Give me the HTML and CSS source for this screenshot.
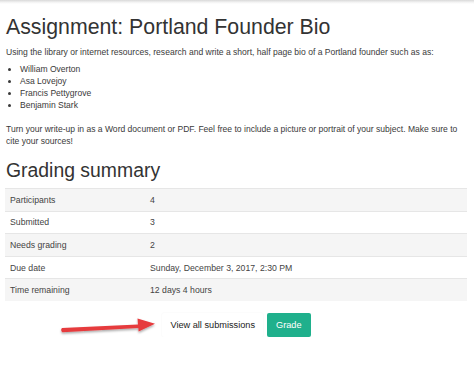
FILE: index.html
```html
<!DOCTYPE html>
<html lang="en">

<head>
    <meta charset="UTF-8">
    <title>Assignment: Portland Founder Bio</title>

    <link rel="stylesheet" href="styles.css">
</head>

<body>
    <div class="topbar"></div>
    <div id="page">
        <h2 class="title">Assignment: Portland Founder Bio</h2>
        <div class="intro">
            <p>Using the library or internet resources, research and write a short, half page bio of a Portland founder such as as:</p>
            <ul>
                <li>William Overton</li>
                <li>Asa Lovejoy</li>
                <li>Francis Pettygrove</li>
                <li>Benjamin Stark</li>
            </ul>
            <p>Turn your write-up in as a Word document or PDF. Feel free to include a picture or portrait of your subject. Make sure to cite your sources!</p>
        </div>

        <h3 class="section">Grading summary</h3>
        <table class="summary">
            <tr>
                <th>Participants</th>
                <td>4</td>
            </tr>
            <tr>
                <th>Submitted</th>
                <td>3</td>
            </tr>
            <tr>
                <th>Needs grading</th>
                <td>2</td>
            </tr>
            <tr>
                <th>Due date</th>
                <td>Sunday, December 3, 2017, 2:30 PM</td>
            </tr>
            <tr>
                <th>Time remaining</th>
                <td>12 days 4 hours</td>
            </tr>
        </table>

        <div class="actions">
            <svg class="arrow" width="110" height="24" viewBox="0 0 110 24">
                <defs>
                    <filter id="sh" x="-10%" y="-50%" width="120%" height="200%">
                        <feDropShadow dx="0" dy="1.5" stdDeviation="1.2" flood-color="#000" flood-opacity="0.35" />
                    </filter>
                </defs>
                <g filter="url(#sh)">
                    <path d="M6 15 L82 11.5 L81.5 5.5 L99 10.8 L82.6 18.6 L82.3 15 L6.3 19.2 Q4.2 17.1 6 15 Z" fill="#e63a3d" />
                </g>
            </svg>
            <button class="btn btn-plain">View all submissions</button>
            <button class="btn btn-grade">Grade</button>
        </div>
    </div>
</body>

</html>
```

FILE: styles.css
```css
body,
html {
    margin: 0;
    padding: 0;
    background: #fff;
    overflow: hidden;
}

body {
    font-family: 'Liberation Sans', Arial, sans-serif;
    color: #3a3a3a;
}

.topbar {
    height: 4px;
    background: linear-gradient(#d9d9d9, #f4f4f4 60%, #fff);
}

#page {
    padding: 0 6px 0 5px;
}

.title {
    font-size: 21.3px;
    font-weight: normal;
    margin: 10px 0 0 1px;
    line-height: 26px;
    color: #333;
}

.intro {
    font-size: 8.55px;
    line-height: 12px;
    margin-left: 1px;
}

.intro p {
    margin: 6px 0 0;
}

.intro ul {
    margin: 5px 0 0;
    padding-left: 14px;
}

.intro ul + p {
    margin-top: 12px;
}

.section {
    font-size: 19.4px;
    font-weight: normal;
    margin: 11px 0 0 1px;
    line-height: 24px;
    color: #333;
}

.summary {
    width: 462px;
    margin-top: 6px;
    border-collapse: collapse;
    font-size: 8.7px;
    color: #444;
}

.summary tr {
    border-top: 1px solid #e6e6e6;
    height: 22.6px;
}

.summary tr:nth-child(odd) {
    background: #f5f5f5;
}

.summary th {
    text-align: left;
    font-weight: normal;
    width: 140px;
    padding: 0 0 0 5px;
}

.summary td {
    padding: 0;
}

.actions {
    position: relative;
    display: flex;
    justify-content: center;
    gap: 4px;
    margin-top: 12px;
}

.arrow {
    position: absolute;
    left: 51px;
    top: 0;
}

.btn {
    font-family: 'Liberation Sans', Arial, sans-serif;
    font-size: 9.2px;
    border: 0;
    border-radius: 2px;
    height: 24px;
    padding: 0 8px;
}

.btn-plain {
    background: #fff;
    color: #222;
    box-shadow: 0 0 2px rgba(0, 0, 0, 0.06);
}

.btn-grade {
    background: #1fb08c;
    color: #fff;
    padding: 0 9px;
}
```
